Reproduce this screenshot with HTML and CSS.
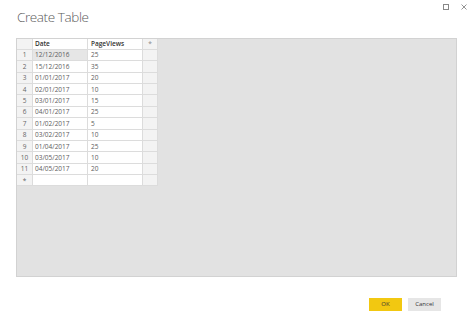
FILE: index.html
```html
<!DOCTYPE html>
<html>
<head>
<meta charset="utf-8">
<link rel="stylesheet" href="styles.css">
</head>
<body>
<div class="dialog">
  <div class="titlebar">
    <div class="title">Create Table</div>
    <div class="controls">
      <span class="ctl-max"></span>
      <svg class="ctl-close" width="6" height="6" viewBox="0 0 6 6"><path d="M0.5 0.5L5.5 5.5M5.5 0.5L0.5 5.5" stroke="#888" stroke-width="0.9" fill="none"/></svg>
    </div>
  </div>
  <div class="canvas">
    <table class="grid">
      <thead>
        <tr><th class="rn"></th><th class="c-date">Date</th><th class="c-pv">PageViews</th><th class="c-add">*</th></tr>
      </thead>
      <tbody>
        <tr><td class="rn">1</td><td class="c-date sel">12/12/2016</td><td class="c-pv">25</td><td class="c-add"></td></tr>
        <tr><td class="rn">2</td><td class="c-date">15/12/2016</td><td class="c-pv">35</td><td class="c-add"></td></tr>
        <tr><td class="rn">3</td><td class="c-date">01/01/2017</td><td class="c-pv">20</td><td class="c-add"></td></tr>
        <tr><td class="rn">4</td><td class="c-date">02/01/2017</td><td class="c-pv">10</td><td class="c-add"></td></tr>
        <tr><td class="rn">5</td><td class="c-date">03/01/2017</td><td class="c-pv">15</td><td class="c-add"></td></tr>
        <tr><td class="rn">6</td><td class="c-date">04/01/2017</td><td class="c-pv">25</td><td class="c-add"></td></tr>
        <tr><td class="rn">7</td><td class="c-date">01/02/2017</td><td class="c-pv">5</td><td class="c-add"></td></tr>
        <tr><td class="rn">8</td><td class="c-date">03/02/2017</td><td class="c-pv">10</td><td class="c-add"></td></tr>
        <tr><td class="rn">9</td><td class="c-date">01/04/2017</td><td class="c-pv">25</td><td class="c-add"></td></tr>
        <tr><td class="rn">10</td><td class="c-date">03/05/2017</td><td class="c-pv">10</td><td class="c-add"></td></tr>
        <tr><td class="rn">11</td><td class="c-date">04/05/2017</td><td class="c-pv">20</td><td class="c-add"></td></tr>
        <tr><td class="rn">*</td><td class="c-date"></td><td class="c-pv"></td><td class="c-add"></td></tr>
      </tbody>
    </table>
  </div>
  <div class="footer">
    <button class="btn btn-ok">OK</button>
    <button class="btn btn-cancel">Cancel</button>
  </div>
</div>
</body>
</html>
```
FILE: styles.css
```css
html, body {
  margin: 0;
  padding: 0;
  background: #ffffff;
}
body {
  width: 474px;
  height: 327px;
  overflow: hidden;
  font-family: "Open Sans", "Noto Sans", "Liberation Sans", sans-serif;
}
.dialog {
  width: 474px;
  height: 327px;
  display: flex;
  flex-direction: column;
  box-sizing: border-box;
}
.titlebar {
  height: 38px;
  display: flex;
  align-items: flex-start;
  padding-left: 17px;
  padding-right: 7px;
  box-sizing: border-box;
}
.title {
  margin-top: 8px;
  font-size: 13.5px;
  line-height: 18px;
  font-weight: 300;
  color: #5a5a5a;
  letter-spacing: -0.4px;
}
.controls {
  margin-left: auto;
  margin-top: 4px;
  display: flex;
  align-items: center;
  gap: 12px;
}
.ctl-max {
  width: 4px;
  height: 4px;
  border: 1px solid #888;
  display: block;
}
.ctl-close {
  display: block;
}
.canvas {
  margin-left: 16px;
  width: 441px;
  height: 239px;
  background: #e2e2e2;
  border: 1px solid #d2d2d2;
  box-sizing: border-box;
}
.grid {
  border-collapse: collapse;
  table-layout: fixed;
  width: 140px;
  font-size: 6.5px;
  color: #5c5c5c;
}
.grid th, .grid td {
  border: 1px solid #dcdcdc;
  padding: 0;
  height: 10.4px;
  line-height: 9px;
  white-space: nowrap;
  overflow: hidden;
  background: #ffffff;
}
.grid th {
  height: 9.8px;
  font-weight: 600;
  color: #333;
  text-align: left;
}
.grid tr:first-child th {
  border-top: none;
}
.grid .rn {
  width: 15px;
  text-align: center;
  background: #f3f3f3;
  border-left: none;
  color: #666;
}
.grid .c-date {
  width: 52px;
  padding-left: 2px;
}
.grid .c-pv {
  width: 51px;
  padding-left: 3px;
}
.grid .c-add {
  width: 14px;
  text-align: center;
  background: #f3f3f3;
  font-weight: normal;
  color: #888;
}
.grid .sel {
  background: #e6e6e6;
}
.footer {
  display: flex;
  justify-content: flex-end;
  gap: 6px;
  padding-right: 33px;
  margin-top: 21px;
}
.btn {
  width: 33px;
  height: 13px;
  border: none;
  padding: 0;
  margin: 0;
  font-family: "Open Sans", "Noto Sans", "Liberation Sans", sans-serif;
  font-size: 6px;
  line-height: 13px;
  color: #333;
}
.btn-ok {
  background: #f2c811;
}
.btn-cancel {
  background: #e6e6e6;
}
```
